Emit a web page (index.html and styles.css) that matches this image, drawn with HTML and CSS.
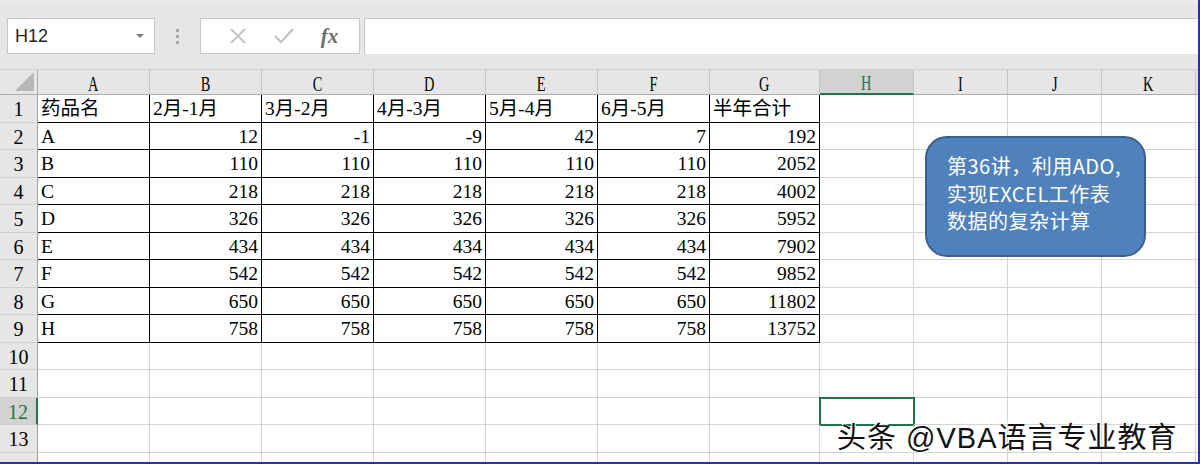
FILE: index.html
```html
<!DOCTYPE html>
<html lang="zh-CN">

<head>
    <meta charset="UTF-8">
    <title>ADO 工作表计算</title>
    <link rel="stylesheet" href="styles.css">
</head>

<body>
    <div class="screen">
        <div class="fbar">
            <div class="namebox">
                <span>H12</span>
                <i class="arrow"></i>
            </div>
            <div class="dots"><b></b><b></b><b></b></div>
            <div class="btns">
                <svg width="20" height="20" viewBox="0 0 20 20">
                    <path d="M3 3 L17 17 M17 3 L3 17" stroke="#c4c4c4" stroke-width="2" fill="none" />
                </svg>
                <svg width="22" height="20" viewBox="0 0 22 20">
                    <path d="M2 10 L8 16 L20 3" stroke="#c4c4c4" stroke-width="2.4" fill="none" />
                </svg>
                <span class="fx">fx</span>
            </div>
            <div class="finput"></div>
        </div>

        <div class="sheet-wrap">
            <div class="sheet" id="sheet"></div>

            <div class="callout">第36讲，利用ADO,<br>实现EXCEL工作表<br>数据的复杂计算</div>
            <div class="mark">头条 @VBA语言专业教育</div>
        </div>
    </div>

    <script>
        // 表格数据
        let cols = ['A', 'B', 'C', 'D', 'E', 'F', 'G', 'H', 'I', 'J', 'K'];
        let data = [
            ['药品名', '2月-1月', '3月-2月', '4月-3月', '5月-4月', '6月-5月', '半年合计'],
            ['A', 12, -1, -9, 42, 7, 192],
            ['B', 110, 110, 110, 110, 110, 2052],
            ['C', 218, 218, 218, 218, 218, 4002],
            ['D', 326, 326, 326, 326, 326, 5952],
            ['E', 434, 434, 434, 434, 434, 7902],
            ['F', 542, 542, 542, 542, 542, 9852],
            ['G', 650, 650, 650, 650, 650, 11802],
            ['H', 758, 758, 758, 758, 758, 13752]
        ];

        let html = '<div class="corner"><i></i></div>';
        cols.forEach(c => {
            html += `<div class="ch${c === 'H' ? ' sel' : ''}"><span>${c}</span></div>`;
        });
        html += '<div class="ch"></div>';

        // 第14行只露出一点，不写行号
        for (let r = 1; r <= 14; r++) {
            html += `<div class="rh${r === 12 ? ' sel' : ''}">${r < 14 ? r : ''}</div>`;
            cols.forEach((c, k) => {
                let row = data[r - 1];
                let cls = 'c';
                let val = '';
                if (row && k < row.length) {
                    cls += ' d';
                    val = row[k];
                    if (typeof val === 'number') cls += ' num';
                }
                if (r === 12 && c === 'H') cls += ' active';
                html += `<div class="${cls}">${val}</div>`;
            });
            html += '<div class="c"></div>';
        }
        document.getElementById('sheet').innerHTML = html;
    </script>
</body>

</html>
```

FILE: styles.css
```css
* {
    margin: 0;
    padding: 0;
    box-sizing: border-box;
}

body {
    width: 1200px;
    height: 464px;
    overflow: hidden;
    background: #fff;
}

.screen {
    width: 1200px;
    height: 464px;
    border-right: 2px solid #2a2ac4;
    border-bottom: 2px solid #2a2ac4;
    overflow: hidden;
    display: flex;
    flex-direction: column;
}

/* 编辑栏 */
.fbar {
    height: 70px;
    flex: none;
    background: #e6e6e6;
    border-top: 3px solid #ececec;
    border-bottom: 1px solid #d0d0d0;
    display: flex;
    align-items: flex-start;
    padding: 15px 0 0 7px;
}

.namebox {
    width: 148px;
    height: 36px;
    background: #fff;
    border: 1px solid #c6c6c6;
    display: flex;
    align-items: center;
    justify-content: space-between;
    padding: 0 10px 0 7px;
    font-family: "Liberation Sans", Arial, sans-serif;
    font-size: 18px;
    color: #262626;
}

.namebox .arrow {
    width: 0;
    height: 0;
    border-left: 4px solid transparent;
    border-right: 4px solid transparent;
    border-top: 4px solid #7a7a7a;
}

.dots {
    width: 45px;
    height: 36px;
    display: flex;
    flex-direction: column;
    align-items: center;
    justify-content: center;
    gap: 3px;
}

.dots b {
    width: 3px;
    height: 3px;
    background: #a8a8a8;
}

.btns {
    width: 160px;
    height: 36px;
    background: #fff;
    border: 1px solid #c6c6c6;
    display: flex;
    align-items: center;
    justify-content: space-around;
    padding: 0 8px 0 14px;
}

.btns .fx {
    font-family: "Liberation Serif", serif;
    font-style: italic;
    font-weight: bold;
    font-size: 21px;
    color: #6e6e6e;
}

.finput {
    flex: 1;
    height: 36px;
    margin-left: 4px;
    background: #fff;
    border-top: 1px solid #c6c6c6;
    border-left: 1px solid #c6c6c6;
}

/* 工作表 */
.sheet-wrap {
    position: relative;
    flex: 1;
    overflow: hidden;
}

.sheet {
    display: grid;
    grid-template-columns: 38px repeat(6, 112px) 110px repeat(4, 94px) 1fr;
    grid-template-rows: 25px;
    grid-auto-rows: 27.5px;
    font-family: "Liberation Serif", "Noto Sans CJK SC", serif;
    font-size: 19.5px;
    color: #000;
}

.corner {
    background: #e6e6e6;
    border-right: 1px solid #ababab;
    border-bottom: 1px solid #ababab;
    display: flex;
    align-items: flex-end;
    justify-content: flex-end;
    padding: 0 3px 3px 0;
}

.corner i {
    width: 0;
    height: 0;
    border-left: 19px solid transparent;
    border-bottom: 19px solid #b7b7b7;
}

.ch {
    background: #e6e6e6;
    border-right: 1px solid #c4c4c4;
    border-bottom: 1px solid #ababab;
    display: flex;
    align-items: center;
    justify-content: center;
    padding-top: 4px;
    font-size: 20px;
}

.ch span {
    display: inline-block;
    transform: scaleX(.72);
}

.ch.sel {
    background: #d2d2d2;
    border-bottom: 2px solid #217346;
    color: #217346;
}

.rh {
    background: #e6e6e6;
    border-right: 1px solid #9e9e9e;
    border-bottom: 1px solid #d0d0d0;
    display: flex;
    align-items: center;
    justify-content: center;
    padding-top: 3px;
    font-size: 20px;
}

.rh.sel {
    background: #d2d2d2;
    border-right: 2px solid #217346;
    color: #217346;
}

.c {
    border-right: 1px solid #d4d4d4;
    border-bottom: 1px solid #d4d4d4;
    display: flex;
    align-items: flex-end;
    padding: 0 3px 1px 3px;
    line-height: 1.2;
    white-space: nowrap;
}

.c.d {
    border-right-color: #000;
    border-bottom-color: #000;
}

.c.num {
    justify-content: flex-end;
}

.c.active {
    outline: 2px solid #217346;
    outline-offset: -1px;
}

/* 文本框 */
.callout {
    position: absolute;
    left: 925px;
    top: 66px;
    width: 221px;
    height: 121px;
    background: #4f81bd;
    border: 2px solid #3a5f8e;
    border-radius: 22px;
    padding: 14px 0 0 20px;
    font-family: "Noto Sans CJK SC", sans-serif;
    font-size: 20px;
    line-height: 27.5px;
    color: #fff;
    letter-spacing: .5px;
}

.mark {
    position: absolute;
    left: 837px;
    top: 344px;
    font-family: "Liberation Sans", "Noto Sans CJK SC", sans-serif;
    font-size: 29px;
    letter-spacing: 1px;
    color: #111;
    text-shadow: 1px 1px 0 #fff, -1px -1px 0 #fff;
    white-space: nowrap;
}
```
